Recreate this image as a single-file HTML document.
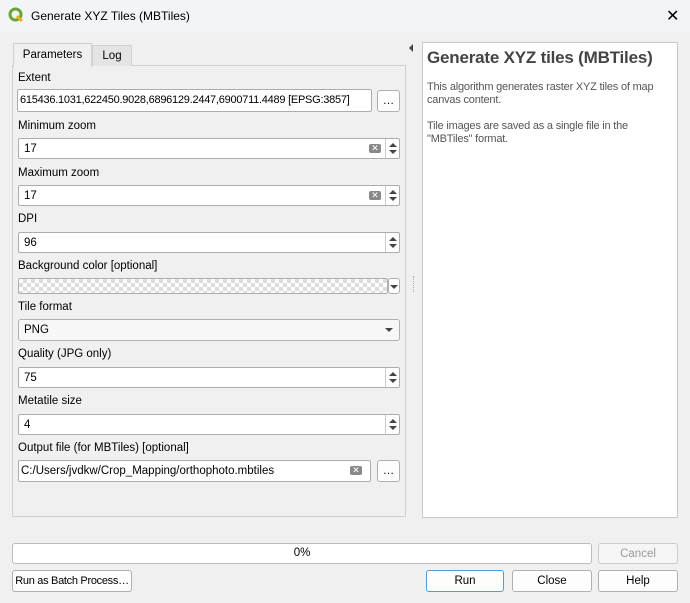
<!DOCTYPE html>
<html><head><style>
*{box-sizing:border-box;margin:0;padding:0;white-space:nowrap}
body{width:690px;height:603px;background:#f0f0f0;font-family:"Liberation Sans",sans-serif;font-size:11.5px;color:#000;position:relative;overflow:hidden}
.a{position:absolute}
.title{left:0;top:0;width:690px;height:32px;background:#f2f5f7}
.lbl{position:absolute;left:18px;font-size:11.5px}
.in{position:absolute;background:#fff;border:1px solid #adadad;border-radius:2px;padding-left:5px;line-height:20px;font-size:11.5px;overflow:hidden}
.sp{position:absolute;width:14px;border-left:1px solid #ccc;right:0;top:0;bottom:0}
.sp:before{content:"";position:absolute;left:3px;top:4px;border:4px solid transparent;border-bottom:4px solid #444;border-top:0}
.sp:after{content:"";position:absolute;left:3px;bottom:4px;border:4px solid transparent;border-top:4px solid #444;border-bottom:0}
.btn{position:absolute;background:#fdfdfd;border:1px solid #b0b0b0;border-radius:3px;text-align:center;line-height:20px;font-size:11.5px}
.clr{position:absolute;right:18px;top:5px;width:12px;height:9px;background:#888;border-radius:2px;color:#fff;font-size:9px;line-height:9px;text-align:center}
.dd{position:absolute;border:4px solid transparent;border-top:4px solid #444;border-bottom:0}
</style></head><body>
<div class="a title"></div>
<svg class="a" style="left:8px;top:7px" width="16" height="16" viewBox="0 0 16 16"><circle cx="7.5" cy="7.5" r="5.5" fill="none" stroke="#6aa53a" stroke-width="3"/><path d="M9 9 L14 14" stroke="#e8b020" stroke-width="3"/></svg>
<div class="a" style="left:31px;top:9px;font-size:12px">Generate XYZ Tiles (MBTiles)</div>
<div class="a" style="left:666px;top:6px;font-size:16px;font-weight:300">✕</div>

<div class="a" style="left:12px;top:65px;width:394px;height:452px;border:1px solid #d0d0d0;background:#f0f0f0"></div>
<div class="a" style="left:13px;top:43px;width:79px;height:24px;border:1px solid #d0d0d0;border-bottom:none;background:#f0f0f0;text-align:center;line-height:22px">Parameters</div>
<div class="a" style="left:92px;top:45px;width:40px;height:21px;border:1px solid #d0d0d0;border-bottom:none;background:#e4e4e4;text-align:center;line-height:21px">Log</div>

<div class="lbl" style="top:72px">Extent</div>
<div class="in" style="left:17px;top:89px;width:355px;height:23px;line-height:21px;padding-left:2px;font-size:11px;letter-spacing:-0.25px">615436.1031,622450.9028,6896129.2447,6900711.4489 [EPSG:3857]</div>
<div class="btn" style="left:377px;top:90px;width:23px;height:22px;line-height:20px">…</div>

<div class="lbl" style="top:120px">Minimum zoom</div>
<div class="in" style="left:18px;top:138px;width:382px;height:21px">17<div class="clr">✕</div><div class="sp"></div></div>
<div class="lbl" style="top:167px">Maximum zoom</div>
<div class="in" style="left:18px;top:185px;width:382px;height:21px">17<div class="clr">✕</div><div class="sp"></div></div>
<div class="lbl" style="top:213px">DPI</div>
<div class="in" style="left:18px;top:232px;width:382px;height:21px">96<div class="sp"></div></div>
<div class="lbl" style="top:260px">Background color [optional]</div>
<div class="a" style="left:18px;top:278px;width:370px;height:16px;border:1px solid #b0b0b0;border-radius:2px;background-color:#fff;background-image:linear-gradient(45deg,#ddd 25%,transparent 25%,transparent 75%,#ddd 75%),linear-gradient(45deg,#ddd 25%,transparent 25%,transparent 75%,#ddd 75%);background-size:8px 8px;background-position:0 0,4px 4px"></div>
<div class="btn" style="left:388px;top:278px;width:12px;height:16px"></div>
<div class="dd" style="left:390px;top:285px"></div>
<div class="lbl" style="top:301px">Tile format</div>
<div class="btn" style="left:18px;top:319px;width:382px;height:22px;text-align:left;padding-left:5px;background:#f7f7f7">PNG</div>
<div class="dd" style="left:385px;top:328px"></div>
<div class="lbl" style="top:348px">Quality (JPG only)</div>
<div class="in" style="left:18px;top:367px;width:382px;height:21px">75<div class="sp"></div></div>
<div class="lbl" style="top:395px">Metatile size</div>
<div class="in" style="left:18px;top:414px;width:382px;height:21px">4<div class="sp"></div></div>
<div class="lbl" style="top:442px">Output file (for MBTiles) [optional]</div>
<div class="in" style="left:18px;top:460px;width:353px;height:22px;padding-left:2px">C:/Users/jvdkw/Crop_Mapping/orthophoto.mbtiles<div class="clr" style="right:8px">✕</div></div>
<div class="btn" style="left:377px;top:460px;width:23px;height:22px;line-height:20px">…</div>

<div class="a" style="left:409px;top:44px;border:4px solid transparent;border-right:4px solid #444;border-left:0"></div>
<div class="a" style="left:413px;top:276px;width:1px;height:16px;border-left:1px dotted #aaa"></div>

<div class="a" style="left:422px;top:42px;width:256px;height:476px;background:#fff;border:1px solid #c8c8c8"></div>
<div class="a" style="left:427px;top:48px;font-size:17px;font-weight:bold;color:#444;letter-spacing:-0.2px">Generate XYZ tiles (MBTiles)</div>
<div class="a" style="left:427px;top:81px;font-size:11px;color:#555;line-height:13px;width:245px;white-space:normal;letter-spacing:-0.2px">This algorithm generates raster XYZ tiles of map canvas content.<br><br>Tile images are saved as a single file in the "MBTiles" format.</div>

<div class="a" style="left:12px;top:543px;width:580px;height:21px;background:#fff;border:1px solid #bcbcbc;border-radius:3px;text-align:center;line-height:19px">0%</div>
<div class="btn" style="left:598px;top:543px;width:80px;height:21px;color:#999;background:#f5f5f5;border-color:#ccc">Cancel</div>
<div class="btn" style="left:12px;top:570px;width:120px;height:22px;font-size:11px;letter-spacing:-0.3px">Run as Batch Process…</div>
<div class="btn" style="left:426px;top:570px;width:78px;height:22px;border-color:#4a9ee0">Run</div>
<div class="btn" style="left:512px;top:570px;width:80px;height:22px">Close</div>
<div class="btn" style="left:598px;top:570px;width:80px;height:22px">Help</div>
</body></html>
